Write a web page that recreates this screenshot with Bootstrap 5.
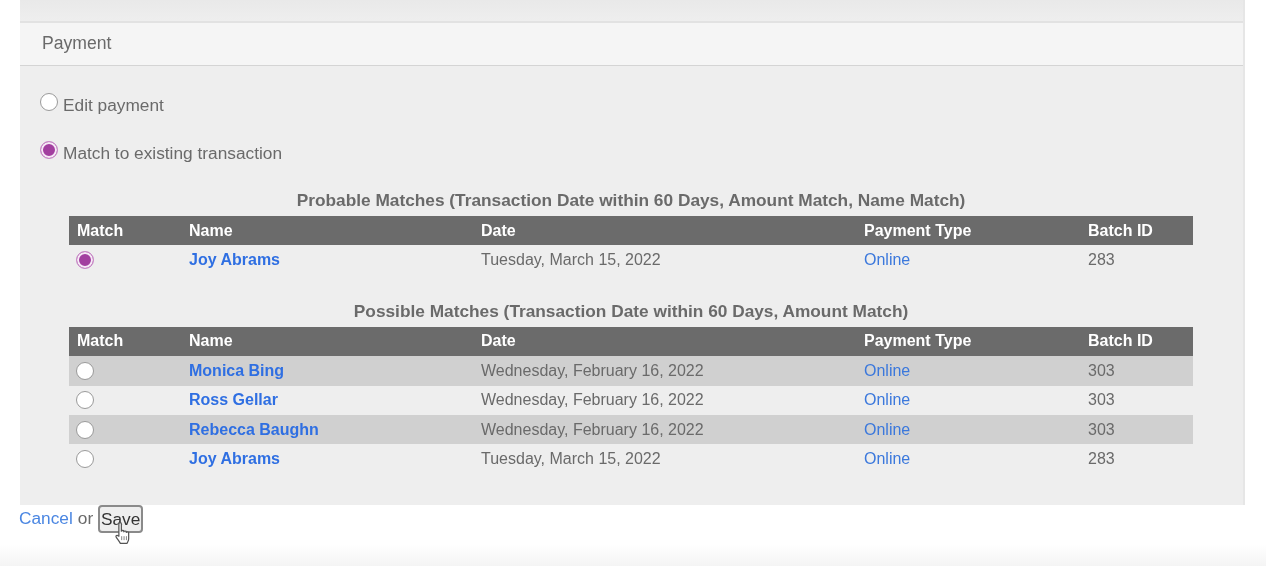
<!DOCTYPE html>
<html lang="en">
<head>
  <meta charset="UTF-8">
  <title>Payment</title>
  <link href="https://cdn.jsdelivr.net/npm/bootstrap@5.3.2/dist/css/bootstrap.min.css" rel="stylesheet">
  <style>
    html, body { height: 566px; overflow: hidden; }
    body {
      font-family: "Liberation Sans", Arial, sans-serif;
      font-size: 16px;
      color: #6a6a6a;
      background: #fff;
    }
    .page-wrap { height: 566px; filter: blur(0.6px); display: flex; flex-direction: column; }
    .panel-shell { margin-left: 20px; width: 1225px; flex: none; border-right: 2px solid #e6e6e6; }
    .panel-top { height: 21px; background: linear-gradient(#e9e9e9, #eee); }
    .panel-head {
      height: 45px;
      padding-left: 22px;
      background: #f5f5f5;
      border-top: 2px solid #e2e2e2;
      border-bottom: 1px solid #d4d4d4;
      font-size: 17.6px;
      line-height: 41px;
    }
    .panel-main { height: 439px; background: #eee; padding: 26px 0 0 20px; }
    .pay-choice { height: 48px; display: flex; align-items: flex-start; font-size: 17.3px; }
    .pay-choice.last { height: 50px; }
    .pay-choice label { line-height: 26px; margin-left: 5px; }
    .pay-radio.form-check-input {
      width: 18px;
      height: 18px;
      margin: 1px 0 0 0;
      flex: none;
      background-color: #fff;
      border: 1.5px solid #9a9a9a;
      opacity: 1;
    }
    .pay-radio.form-check-input:checked,
    .row-radio.form-check-input:checked {
      background-image: none;
      background-color: #a23f9f;
      border: 1.5px solid #c98cc8;
      box-shadow: inset 0 0 0 2px #f6e9f6;
    }
    .match-area { margin: 0 0 0 29px; width: 1124px; }
    .match-title { font-size: 17.3px; font-weight: 700; text-align: center; line-height: 20px; margin: 0 0 6px; height: 20px; }
    .match-title.next { margin-top: 26px; }
    .match-table { width: 100%; margin: 0; table-layout: fixed; border-collapse: collapse; }
    .match-table th, .match-table td {
      padding: 0 0 0 8px;
      height: 29.4px;
      vertical-align: middle;
      border: 0;
      background: transparent;
      color: #6a6a6a;
      box-shadow: none;
    }
    .match-table thead th { background: #6b6b6b; color: #fff; font-weight: 700; }
    .match-table tr.shade td { background: #d0d0d0; }
    .match-table a { color: #3b78dc; text-decoration: none; }
    .match-table a.who { color: #2f6fe2; font-weight: 700; }
    .col-match { width: 112px; }
    .col-name { width: 292px; }
    .col-date { width: 383px; }
    .col-type { width: 224px; }
    .row-radio.form-check-input {
      display: block;
      width: 18px;
      height: 18px;
      margin: 0 0 0 -1px;
      background-color: #fff;
      border: 1.5px solid #9a9a9a;
      opacity: 1;
    }
    .action-line { height: 40px; flex: none; padding-left: 19px; display: flex; align-items: flex-start; gap: 5px; font-size: 17.3px; line-height: 26px; position: relative; }
    .action-line a { color: #4a86e2; text-decoration: none; }
    .save-btn {
      height: 28px;
      width: 45px;
      padding: 0;
      background: #eee;
      color: #333;
      border: 2px solid #8a8a8a;
      border-radius: 4px;
      font-size: 17.3px;
      line-height: 24px;
    }
    .hand-cursor { position: absolute; left: 112px; top: 16px; width: 25px; height: 27px; }
    .foot-strip { flex: 1; background: linear-gradient(#fff, #f4f4f4); }
  </style>
</head>
<body>
<div class="page-wrap">
  <div class="panel-shell">
    <div class="panel-top"></div>
    <div class="panel-head">Payment</div>
    <div class="panel-main">
      <div class="pay-choice">
        <input class="form-check-input pay-radio" type="radio" name="mode" id="modeEdit">
        <label for="modeEdit">Edit payment</label>
      </div>
      <div class="pay-choice last">
        <input class="form-check-input pay-radio" type="radio" name="mode" id="modeMatch" checked>
        <label for="modeMatch">Match to existing transaction</label>
      </div>
      <div class="match-area">
        <p class="match-title">Probable Matches (Transaction Date within 60 Days, Amount Match, Name Match)</p>
        <table class="table match-table">
          <thead>
            <tr>
              <th class="col-match">Match</th><th class="col-name">Name</th><th class="col-date">Date</th><th class="col-type">Payment Type</th><th>Batch ID</th>
            </tr>
          </thead>
          <tbody>
            <tr>
              <td><input class="form-check-input row-radio" type="radio" name="pick" checked></td>
              <td><a class="who" href="#">Joy Abrams</a></td><td>Tuesday, March 15, 2022</td><td><a href="#">Online</a></td><td>283</td>
            </tr>
          </tbody>
        </table>
        <p class="match-title next">Possible Matches (Transaction Date within 60 Days, Amount Match)</p>
        <table class="table match-table">
          <thead>
            <tr>
              <th class="col-match">Match</th><th class="col-name">Name</th><th class="col-date">Date</th><th class="col-type">Payment Type</th><th>Batch ID</th>
            </tr>
          </thead>
          <tbody>
            <tr class="shade">
              <td><input class="form-check-input row-radio" type="radio" name="pick"></td>
              <td><a class="who" href="#">Monica Bing</a></td><td>Wednesday, February 16, 2022</td><td><a href="#">Online</a></td><td>303</td>
            </tr>
            <tr>
              <td><input class="form-check-input row-radio" type="radio" name="pick"></td>
              <td><a class="who" href="#">Ross Gellar</a></td><td>Wednesday, February 16, 2022</td><td><a href="#">Online</a></td><td>303</td>
            </tr>
            <tr class="shade">
              <td><input class="form-check-input row-radio" type="radio" name="pick"></td>
              <td><a class="who" href="#">Rebecca Baughn</a></td><td>Wednesday, February 16, 2022</td><td><a href="#">Online</a></td><td>303</td>
            </tr>
            <tr>
              <td><input class="form-check-input row-radio" type="radio" name="pick"></td>
              <td><a class="who" href="#">Joy Abrams</a></td><td>Tuesday, March 15, 2022</td><td><a href="#">Online</a></td><td>283</td>
            </tr>
          </tbody>
        </table>
      </div>
    </div>
  </div>
  <div class="action-line">
    <a href="#">Cancel</a><span>or</span>
    <button class="save-btn" type="button">Save</button>
    <svg class="hand-cursor" viewBox="0 0 22 24" aria-hidden="true">
      <path d="M6 2.500c0-1.300 2.200-1.300 2.200 0V9c0-.9 2.200-.9 2.200 0v.6c0-.9 2.200-.9 2.200 0v.6c0-.8 2.100-.8 2.100.2v5.400c0 1.800-.8 2.600-1.400 4H7.200c-.6-1.500-2.200-3.200-3.600-5.400-.8-1.300.8-2.300 1.800-1.200L6 13.500z" fill="#fff" stroke="#555" stroke-width="1.100" stroke-linejoin="round"/>
      <path d="M8.500 13.500v3.500M10.600 13.500v3.500M12.700 13.500v3.500" stroke="#777" stroke-width=".8" fill="none"/>
    </svg>
  </div>
  <div class="foot-strip"></div>
</div>
<script src="https://cdn.jsdelivr.net/npm/bootstrap@5.3.2/dist/js/bootstrap.bundle.min.js"></script>
</body>
</html>
